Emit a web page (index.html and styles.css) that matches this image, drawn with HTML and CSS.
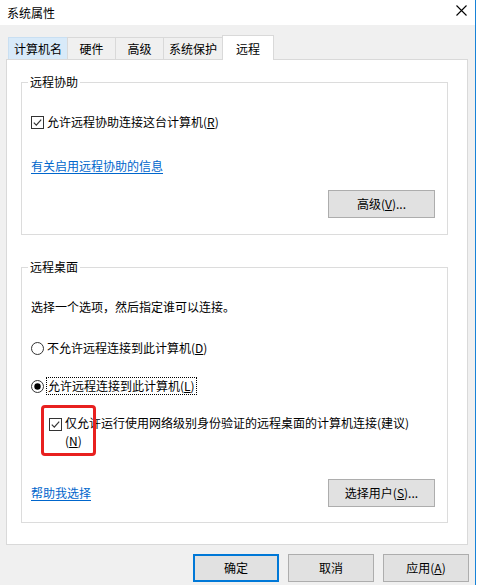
FILE: index.html
```html
<!DOCTYPE html>
<html lang="zh-CN">
<head>
<meta charset="utf-8">
<title>系统属性</title>
<link rel="stylesheet" href="styles.css">
</head>
<body>
<div class="window">
  <div class="titlebar">
    <span class="title">系统属性</span>
    <svg class="close" width="11" height="11" viewBox="0 0 11 11"><path d="M0.5 0.5L10.5 10.5M10.5 0.5L0.5 10.5" stroke="#000" stroke-width="1.1" fill="none"/></svg>
  </div>
  <div class="client">
    <div class="tabs">
      <div class="tab hover">计算机名</div>
      <div class="tab">硬件</div>
      <div class="tab">高级</div>
      <div class="tab">系统保护</div>
      <div class="tab active">远程</div>
    </div>
    <div class="panel">
      <div class="group g1">
        <div class="legend">远程协助</div>
        <div class="opt check-r">
          <svg class="box" width="13" height="13" viewBox="0 0 13 13"><rect x="0.5" y="0.5" width="12" height="12" fill="#fff" stroke="#333"/><path d="M2.8 6.6L5.3 9.1L10.2 3.6" stroke="#333" stroke-width="1.2" fill="none"/></svg>
          <span class="txt">允许远程协助连接这台计算机(<u>R</u>)</span>
        </div>
        <a class="link info-link">有关启用远程协助的信息</a>
        <div class="btnrow"><button class="btn wide">高级(<u>V</u>)...</button></div>
      </div>
      <div class="group g2">
        <div class="legend">远程桌面</div>
        <div class="desc">选择一个选项，然后指定谁可以连接。</div>
        <div class="opt radio-d">
          <svg class="box" width="13" height="13" viewBox="0 0 13 13"><circle cx="6.5" cy="6.5" r="6" fill="#fff" stroke="#333"/></svg>
          <span class="txt">不允许远程连接到此计算机(<u>D</u>)</span>
        </div>
        <div class="opt radio-l">
          <svg class="box" width="13" height="13" viewBox="0 0 13 13"><circle cx="6.5" cy="6.5" r="6" fill="#fff" stroke="#333"/><circle cx="6.5" cy="6.5" r="3.2" fill="#000"/></svg>
          <span class="txt focus">允许远程连接到此计算机(<u>L</u>)</span>
        </div>
        <div class="opt nla">
          <svg class="box" width="13" height="13" viewBox="0 0 13 13"><rect x="0.5" y="0.5" width="12" height="12" fill="#fff" stroke="#333"/><path d="M2.8 6.6L5.3 9.1L10.2 3.6" stroke="#333" stroke-width="1.2" fill="none"/></svg>
          <span class="txt multi">仅允许运行使用网络级别身份验证的远程桌面的计算机连接(建议)<br>(<u>N</u>)</span>
          <span class="mark"></span>
        </div>
        <div class="g2-foot">
          <a class="link">帮助我选择</a>
          <button class="btn wide">选择用户(<u>S</u>)...</button>
        </div>
      </div>
    </div>
    <div class="footer">
      <button class="btn dlg default">确定</button>
      <button class="btn dlg">取消</button>
      <button class="btn dlg">应用(<u>A</u>)</button>
    </div>
  </div>
</div>
</body>
</html>
```

FILE: styles.css
```css
* { box-sizing: border-box; }
html, body { margin: 0; padding: 0; background: #fff; }
body {
  font-family: "Noto Sans CJK SC", "Microsoft YaHei", sans-serif;
  font-size: 12px;
  color: #000;
}
.window {
  width: 476px;
  height: 585px;
  border-right: 1px solid #1883d7;
  background: #f0f0f0;
  overflow: hidden;
}
.titlebar {
  height: 25px;
  background: #fff;
  display: flex;
  align-items: center;
  justify-content: space-between;
  padding: 0 8px 0 7px;
}
.title { line-height: 16px; }
.close { display: block; margin-top: -4px; }

.client { padding: 12px 7px 0 6px; }

.tabs {
  display: flex;
  align-items: flex-start;
  height: 22px;
  padding-left: 2px;
}
.tab {
  height: 22px;
  min-width: 49px;
  padding: 0 5px;
  border: 1px solid #d9d9d9;
  border-bottom: 0;
  margin-left: -1px;
  display: flex;
  align-items: center;
  justify-content: center;
  line-height: 16px;
  background: #f0f0f0;
}
.tab:first-child { margin-left: 0; }
.tab.hover { background: #d8eaf9; border-color: #c9dff2; }
.tab.active {
  position: relative;
  z-index: 1;
  width: 52px;
  height: 25px;
  margin-top: -2px;
  margin-bottom: -1px;
  background: #fff;
  padding-top: 1px;
}

.panel {
  background: #fff;
  border: 1px solid #d9d9d9;
  padding: 14px 19px 21px 14px;
}

.group {
  border: 1px solid #dcdcdc;
  padding: 0 12px 0 9px;
}
.g1 { margin-top: 8px; padding-bottom: 16px; }
.g2 { margin-top: 32px; padding-bottom: 15px; }
.legend {
  width: max-content;
  margin: -9px 0 0 -3px;
  padding: 0 2px;
  background: #fff;
  line-height: 16px;
}

.opt {
  display: flex;
  align-items: center;
  line-height: 16px;
}
.opt .box { display: block; flex: none; }
.opt .txt { margin-left: 3px; }
.check-r { margin-top: 24px; }
.radio-d { margin-top: 25px; }
.radio-l { margin-top: 22px; }
.radio-l .txt.focus {
  margin-left: 3px;
  padding: 0 1px;
  outline: 1px dotted #000;
}
.nla {
  position: relative;
  margin-top: 20px;
  margin-left: 18px;
  align-items: flex-start;
  width: max-content;
}
.nla .box { margin-top: 4px; }
.nla .txt { line-height: 18px; }
.mark {
  position: absolute;
  left: -8px;
  top: -9px;
  width: 55px;
  height: 51px;
  border: 3px solid #e8201f;
  border-radius: 4px;
}

.desc { margin-top: 24px; line-height: 16px; }

.link {
  display: block;
  width: max-content;
  color: #0066cc;
  text-decoration: underline;
  text-underline-offset: 2px;
  line-height: 16px;
  cursor: pointer;
}
.info-link { margin-top: 28px; }

.btnrow {
  margin-top: 16px;
  display: flex;
  justify-content: flex-end;
}
.btn {
  font-family: inherit;
  font-size: 12px;
  color: #000;
  height: 28px;
  background: #e1e1e1;
  border: 1px solid #adadad;
  padding: 0;
  line-height: 16px;
  border-radius: 0;
}
.btn.wide { width: 107px; }

.g2-foot {
  margin-top: 29px;
  display: flex;
  align-items: center;
  justify-content: space-between;
}

.footer {
  margin-top: 9px;
  margin-right: -1px;
  display: flex;
  justify-content: flex-end;
  gap: 9px;
}
.btn.dlg { width: 86px; }
.btn.default { border: 2px solid #0078d7; }
```
